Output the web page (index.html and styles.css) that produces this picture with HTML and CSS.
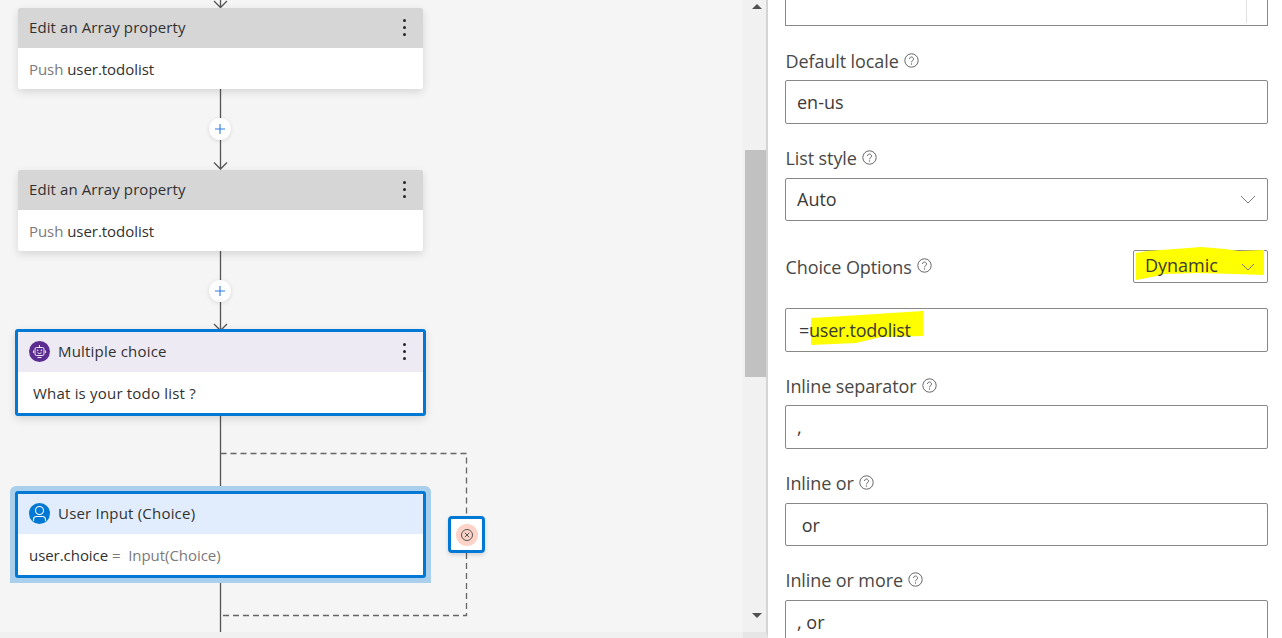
FILE: index.html
```html
<!DOCTYPE html>
<html lang="en">
<head>
<meta charset="utf-8">
<title>Dialog flow</title>
<link rel="stylesheet" href="styles.css">
</head>
<body>
<div class="app">
  <main class="canvas">
    <svg class="wires" width="743" height="632" viewBox="0 0 743 632" fill="none">
      <g class="wire">
        <path d="M220.5 0V7M214 1l6.500 6.500L227 1"/>
        <path d="M220.500 89V169M214 162.500l6.500 6.500 6.500-6.500"/>
        <path d="M220.500 251V331M214 324l6.500 6.500 6.500-6.500"/>
        <path d="M220.500 416V491M220.500 578V632"/>
      </g>
      <path class="dash" d="M220.500 453.500H466.500V516M466.500 553V615.500H220.500"/>
    </svg>

    <div class="add add-one"><svg width="12" height="12" viewBox="0 0 12 12"><path d="M6 1V11M1 6H11"/></svg></div>
    <div class="add add-two"><svg width="12" height="12" viewBox="0 0 12 12"><path d="M6 1V11M1 6H11"/></svg></div>

    <article class="node node-one">
      <header class="node-head head-grey"><span>Edit an Array property</span><i class="dots"><b></b><b></b><b></b></i></header>
      <div class="node-body"><span class="muted">Push</span> user.todolist</div>
    </article>
    <article class="node node-two">
      <header class="node-head head-grey"><span>Edit an Array property</span><i class="dots"><b></b><b></b><b></b></i></header>
      <div class="node-body"><span class="muted">Push</span> user.todolist</div>
    </article>

    <article class="node node-sel node-three">
      <header class="node-head head-purple">
        <span class="badge badge-purple"><svg width="15" height="15" viewBox="0 0 15 15" fill="none" stroke="#fff" stroke-width=".9"><path d="M7.500 1V3.500"/><rect x="3" y="3.500" width="9" height="8" rx="1.500"/><path d="M1.500 6.500V9M13.500 6.500V9M5.500 8.800q2 1.500 4 0M5.500 13.500H9.500"/><circle cx="5.700" cy="6.300" r=".4"/><circle cx="9.300" cy="6.300" r=".4"/></svg></span>
        <span>Multiple choice</span><i class="dots"><b></b><b></b><b></b></i>
      </header>
      <div class="node-body body-indent">What is your todo list ?</div>
    </article>

    <div class="halo"></div>
    <article class="node node-sel node-four">
      <header class="node-head head-blue">
        <span class="badge badge-blue"><svg width="15" height="17" viewBox="0 0 15 17" fill="none" stroke="#fff" stroke-width="1.100"><circle cx="7.500" cy="5.500" r="4"/><path d="M1.500 16v-1.500q0-3 3-3h6q3 0 3 3V16"/></svg></span>
        <span>User Input (Choice)</span>
      </header>
      <div class="node-body">user.choice <span class="muted">= &nbsp;Input(Choice)</span></div>
    </article>

    <div class="catch"><span class="catch-dot"><svg width="14" height="14" viewBox="0 0 14 14" fill="none" stroke="#555" stroke-width="1"><circle cx="7" cy="7" r="5.500"/><path d="M4.800 4.800l4.400 4.400M9.200 4.800l-4.400 4.400"/></svg></span></div>
  </main>

  <div class="scrollbar">
    <span class="arrow arrow-up"></span>
    <span class="thumb"></span>
    <span class="arrow arrow-down"></span>
  </div>

  <aside class="panel">
    <div class="input input-top"><span class="input-rule"></span></div>

    <div class="field field-first">
      <div class="label">Default locale<svg class="help"><use href="#help"/></svg></div>
      <div class="input">en-us</div>
    </div>
    <div class="field">
      <div class="label">List style<svg class="help"><use href="#help"/></svg></div>
      <div class="input input-select"><span class="nudge">Auto</span><svg class="chev" width="16" height="9" viewBox="0 0 16 9"><path d="M1 1l7 7 7-7"/></svg></div>
    </div>

    <div class="choice-row">
      <div class="label">Choice Options<svg class="help"><use href="#help"/></svg></div>
      <div class="dropdown">
        <svg class="mark mark-dyn" width="130" height="34" viewBox="0 0 130 34"><path d="M1 6L12 4 40 2 66 0 90 2 104 4 129 3 129 28 100 27 62 26 30 27 12 31 1 33Z"/></svg>
        <span class="over nudge-more">Dynamic</span>
        <svg class="chev over" width="14" height="8" viewBox="0 0 14 8"><path d="M1 1l6 6 6-6"/></svg>
      </div>
    </div>

    <div class="input input-expr">
      <svg class="mark mark-expr" width="113" height="35" viewBox="0 0 113 35"><path d="M0 7L50 4 80 2 112 0 112 25 70 26 45 32 0 34Z"/></svg>
      <span class="over">=user.todolist</span>
    </div>

    <div class="field field-tight">
      <div class="label">Inline separator<svg class="help"><use href="#help"/></svg></div>
      <div class="input">,</div>
    </div>
    <div class="field">
      <div class="label">Inline or<svg class="help"><use href="#help"/></svg></div>
      <div class="input input-short">&nbsp;or</div>
    </div>
    <div class="field">
      <div class="label">Inline or more<svg class="help"><use href="#help"/></svg></div>
      <div class="input">, or</div>
    </div>
  </aside>
</div>

<svg class="defs" width="0" height="0">
  <symbol id="help" viewBox="0 0 15 15">
    <circle cx="7.500" cy="7.500" r="6.700" fill="none" stroke="#666" stroke-width="1"/>
    <path d="M5.500 6a2 2 0 1 1 3.200 1.600c-.8.500-1.200.9-1.200 1.700" fill="none" stroke="#666" stroke-width="1"/>
    <circle cx="7.500" cy="11" r=".7" fill="#666"/>
  </symbol>
</svg>
</body>
</html>
```
FILE: styles.css
```css
* { box-sizing: border-box; }
html, body { margin: 0; height: 100%; overflow: hidden; background: #fff; }
body { font-family: "Open Sans", "Noto Sans", sans-serif; color: #323130; }

.app { display: flex; width: 1282px; height: 638px; overflow: hidden; }

/* canvas */
.canvas { position: relative; flex: 0 0 743px; height: 638px; background: #f5f5f5; border-bottom: 6px solid #f0f0f0; overflow: hidden; }
.wires { position: absolute; left: 0; top: 0; }
.wire path { stroke: #555; stroke-width: 1.300; }
.dash { stroke: #666; stroke-width: 1.300; stroke-dasharray: 6 4; }

.add { position: absolute; left: 209px; width: 22px; height: 22px; border-radius: 50%; background: #fff; box-shadow: 0 1px 4px rgba(0,0,0,.12); display: flex; align-items: center; justify-content: center; }
.add svg path { stroke: #2f7be5; stroke-width: 1.100; fill: none; }
.add-one { top: 118px; }
.add-two { top: 280px; }

.node { position: absolute; left: 18px; width: 405px; height: 81px; background: #fff; border-radius: 2px; box-shadow: 0 3px 8px rgba(0,0,0,.13); font-size: 15px; line-height: 20px; display: flex; flex-direction: column; }
.node-one { top: 8px; }
.node-two { top: 170px; }
.node-sel { left: 15px; width: 411px; height: 87px; border: 3px solid #0078d4; border-radius: 3px; }
.node-three { top: 329px; }
.node-four { top: 491px; box-shadow: none; }
.halo { position: absolute; left: 10px; top: 486px; width: 421px; height: 97px; background: #a9cfec; border-radius: 6px 6px 0 0; }

.node-head { flex: 0 0 40px; display: flex; align-items: center; padding: 0 0 2px 11px; border-radius: 2px 2px 0 0; letter-spacing: .1px; }
.node-sel .node-head { letter-spacing: .2px; }
.head-grey { background: #d6d6d6; }
.head-purple { background: #edeaf3; }
.head-blue { background: #e1edfc; }
.node-body { flex: 1; display: flex; align-items: center; padding: 1px 0 0 11px; white-space: pre; letter-spacing: -.05px; }
.body-indent { padding-left: 15px; letter-spacing: .2px; }
.muted { color: #7a7a7a; }

.dots { margin-left: auto; margin-right: 17px; display: flex; flex-direction: column; gap: 4px; }
.dots b { display: block; width: 3px; height: 3px; border-radius: 50%; background: #252423; }

.badge { flex: 0 0 21px; width: 21px; height: 21px; border-radius: 50%; display: flex; align-items: center; justify-content: center; margin-right: 8px; }
.badge-purple { background: #5c2d91; }
.badge-blue { background: #0078d4; }

.catch { position: absolute; left: 448px; top: 516px; width: 37px; height: 37px; background: #fff; border: 3px solid #0078d4; border-radius: 4px; box-shadow: 0 2px 4px rgba(0,0,0,.15); display: flex; align-items: center; justify-content: center; }
.catch-dot { width: 22px; height: 22px; border-radius: 50%; background: #fcd3c6; display: flex; align-items: center; justify-content: center; }

/* scrollbar */
.scrollbar { flex: 0 0 25px; height: 638px; background: #f1f1f1; border-right: 2px solid #d4d4d4; border-bottom: 6px solid #e6e6e6; display: flex; flex-direction: column; align-items: center; padding-left: 2px; }
.arrow { width: 0; height: 0; border-left: 5px solid transparent; border-right: 5px solid transparent; margin-left: 2px; }
.arrow-up { border-bottom: 5px solid #505050; margin-top: 4px; }
.arrow-down { border-top: 5px solid #505050; margin-top: 236px; }
.thumb { width: 21px; height: 227px; background: #c1c1c1; margin-top: 141px; }

/* panel */
.panel { flex: 1; padding: 0 14px 0 17px; font-size: 18px; line-height: 22px; color: #494846; overflow: hidden; }
.field { margin-top: 23px; }
.field-first { margin-top: 24px; }
.field-tight { margin-top: 23px; }
.label { display: flex; align-items: center; gap: 5px; height: 22px; margin-bottom: 9px; padding-left: .5px; white-space: pre; letter-spacing: -.1px; }
.field-first .label, .field-tight .label { margin-bottom: 8px; }
.help { width: 15px; height: 15px; margin-top: -2px; }
.input { position: relative; height: 44px; background: #fff; border: 1px solid #8a8886; border-radius: 2px; padding: 0 11px; display: flex; align-items: center; white-space: pre; color: #3b3a39; }
.input-top { height: 26px; border-top: 0; border-radius: 0; }
.input-rule { position: absolute; right: 20px; top: 0; bottom: 2px; width: 1px; background: #e1e1e1; }
.input-select { height: 43px; justify-content: space-between; }
.input-short { height: 43px; }
.nudge { position: relative; bottom: 1px; }
.nudge-more { bottom: 2px; }
.chev { flex: none; }
.chev path { fill: none; stroke: #777; stroke-width: 1; }
.choice-row { display: flex; justify-content: space-between; align-items: center; height: 33px; margin-top: 29px; margin-bottom: 25px; }
.choice-row .label { margin-bottom: 0; }
.dropdown { position: relative; width: 135px; height: 33px; background: #fff; border: 1px solid #8a8886; border-radius: 2px; display: flex; align-items: center; justify-content: space-between; padding: 0 12px 0 11px; color: #3b3a39; }
.mark { position: absolute; z-index: 0; }
.mark path { fill: #ffff00; }
.over { position: relative; z-index: 1; }
.mark-dyn { left: 1px; top: -4px; }
.mark-expr { left: 25px; top: 2px; }
.input-expr { padding-left: 13px; letter-spacing: -.25px; }
.defs { position: absolute; }
```
